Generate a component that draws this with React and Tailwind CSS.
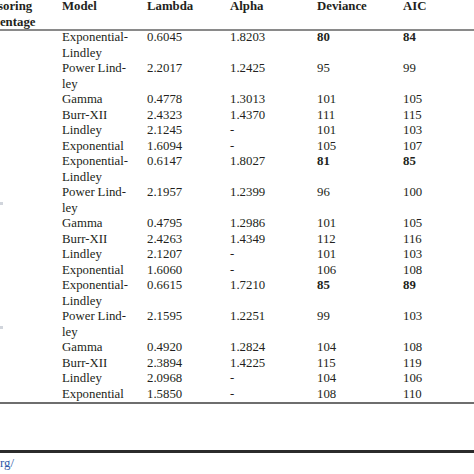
import React from "react";

// model fit table, three censoring groups
const groups = [
  [
    { model: ["Exponential-", "Lindley"], lambda: "0.6045", alpha: "1.8203", dev: "80", aic: "84", best: true },
    { model: ["Power Lind-", "ley"], lambda: "2.2017", alpha: "1.2425", dev: "95", aic: "99" },
    { model: ["Gamma"], lambda: "0.4778", alpha: "1.3013", dev: "101", aic: "105" },
    { model: ["Burr-XII"], lambda: "2.4323", alpha: "1.4370", dev: "111", aic: "115" },
    { model: ["Lindley"], lambda: "2.1245", alpha: "-", dev: "101", aic: "103" },
    { model: ["Exponential"], lambda: "1.6094", alpha: "-", dev: "105", aic: "107" },
  ],
  [
    { model: ["Exponential-", "Lindley"], lambda: "0.6147", alpha: "1.8027", dev: "81", aic: "85", best: true },
    { model: ["Power Lind-", "ley"], lambda: "2.1957", alpha: "1.2399", dev: "96", aic: "100", mark: true },
    { model: ["Gamma"], lambda: "0.4795", alpha: "1.2986", dev: "101", aic: "105" },
    { model: ["Burr-XII"], lambda: "2.4263", alpha: "1.4349", dev: "112", aic: "116" },
    { model: ["Lindley"], lambda: "2.1207", alpha: "-", dev: "101", aic: "103" },
    { model: ["Exponential"], lambda: "1.6060", alpha: "-", dev: "106", aic: "108" },
  ],
  [
    { model: ["Exponential-", "Lindley"], lambda: "0.6615", alpha: "1.7210", dev: "85", aic: "89", best: true },
    { model: ["Power Lind-", "ley"], lambda: "2.1595", alpha: "1.2251", dev: "99", aic: "103", mark: true },
    { model: ["Gamma"], lambda: "0.4920", alpha: "1.2824", dev: "104", aic: "108" },
    { model: ["Burr-XII"], lambda: "2.3894", alpha: "1.4225", dev: "115", aic: "119" },
    { model: ["Lindley"], lambda: "2.0968", alpha: "-", dev: "104", aic: "106" },
    { model: ["Exponential"], lambda: "1.5850", alpha: "-", dev: "108", aic: "110" },
  ],
];

const cols = "grid grid-cols-[62px_85px_83px_87px_86px_1fr]";

const ModelCell = ({ lines }) => (
  <div>
    {lines.map((l, i) =>
      l === "Power Lind-" ? (
        <div key={i} className="flex justify-between w-[64px]">
          <span>Power</span>
          <span>Lind-</span>
        </div>
      ) : (
        <div key={i}>{l}</div>
      )
    )}
  </div>
);

const Row = ({ r }) => (
  <div className={cols}>
    <div>
      {r.mark && <div className="h-[15.5px]" />}
      {r.mark && <div className="mt-[1px] h-[3px] w-[3px] bg-gray-300" />}
    </div>
    <ModelCell lines={r.model} />
    <div>{r.lambda}</div>
    <div>{r.alpha}</div>
    <div className={r.best ? "font-bold" : ""}>{r.dev}</div>
    <div className={r.best ? "font-bold" : ""}>{r.aic}</div>
  </div>
);

export default function App() {
  return (
    <div
      className="w-[474px] h-[474px] overflow-hidden bg-white text-[#231f20] text-[12.8px] leading-[15.5px]"
      style={{ fontFamily: '"Liberation Serif", "Times New Roman", serif' }}
    >
      {/* header */}
      <div className={`${cols} -mt-[1px] h-[30px] font-bold`}>
        <div className="-ml-[24px] whitespace-nowrap">
          <div>Censoring</div>
          <div>percentage</div>
        </div>
        <div>Model</div>
        <div>Lambda</div>
        <div>Alpha</div>
        <div>Deviance</div>
        <div>AIC</div>
      </div>
      <div className="h-[2px] bg-[#8a8a8a]" />

      {/* body */}
      <div className="-mt-[1px]">
        {groups.map((g, gi) => (
          <div key={gi}>
            {g.map((r, ri) => (
              <Row key={ri} r={r} />
            ))}
          </div>
        ))}
      </div>
      <div className="h-[2px] bg-[#6e6e6e]" />

      <div className="h-[46px]" />
      <div className="h-[3px] bg-[#2b2b2b]" />

      <div className="mt-[3px] -ml-[26px] text-[#2f5aa8] whitespace-nowrap">doi.org/</div>
    </div>
  );
}
